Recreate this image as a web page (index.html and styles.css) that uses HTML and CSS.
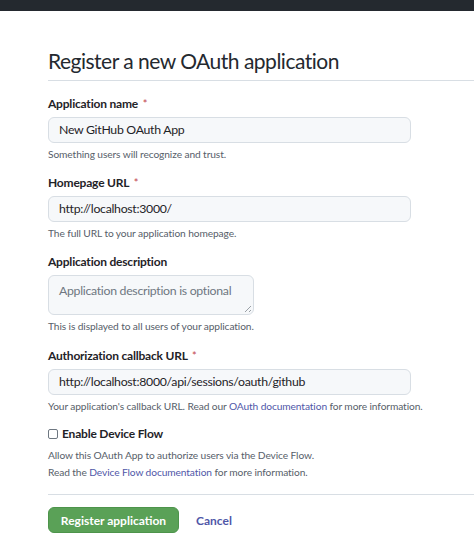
FILE: index.html
```html
<!DOCTYPE html>
<html lang="en">
<head>
<meta charset="utf-8">
<title>Register a new OAuth application</title>
<link rel="stylesheet" href="styles.css">
</head>
<body>
<div class="topbar"></div>
<main class="main">
  <div class="header">
    <h1 class="title">Register a new OAuth application</h1>
  </div>
  <form class="form">
    <div class="group">
      <label class="label">Application name <span class="req">*</span></label>
      <div class="input">New GitHub OAuth App</div>
      <p class="note">Something users will recognize and trust.</p>
    </div>
    <div class="group">
      <label class="label">Homepage URL <span class="req">*</span></label>
      <div class="input">http://localhost:3000/</div>
      <p class="note">The full URL to your application homepage.</p>
    </div>
    <div class="group group-ta">
      <label class="label">Application description</label>
      <div class="textarea"><span class="placeholder">Application description is optional</span><span class="grip"></span></div>
      <p class="note">This is displayed to all users of your application.</p>
    </div>
    <div class="group">
      <label class="label">Authorization callback URL <span class="req">*</span></label>
      <div class="input">http://localhost:8000/api/sessions/oauth/github</div>
      <p class="note">Your application's callback URL. Read our <a class="link" href="#">OAuth documentation</a> for more information.</p>
    </div>
    <div class="group device">
      <label class="check-label"><span class="checkbox"></span>Enable Device Flow</label>
      <p class="note note-tight">Allow this OAuth App to authorize users via the Device Flow.</p>
      <p class="note note-tight">Read the <a class="link" href="#">Device Flow documentation</a> for more information.</p>
    </div>
    <div class="actions">
      <button class="btn" type="button">Register application</button>
      <a class="cancel" href="#">Cancel</a>
    </div>
  </form>
</main>
</body>
</html>
```
FILE: styles.css
```css
* { box-sizing: border-box; }
body {
  margin: 0;
  background: #ffffff;
  font-family: Lato, "Noto Sans", sans-serif;
  color: #1f2328;
}
.topbar {
  height: 11px;
  background: #24292f;
}
.main {
  padding-left: 48px;
}
.header {
  margin-top: 34px;
  border-bottom: 1px solid #d8dee4;
  padding-bottom: 3px;
}
.title {
  margin: 0;
  font-size: 21px;
  font-weight: 400;
  letter-spacing: -0.5px;
  line-height: 32px;
  color: #24292f;
}
.form {
  margin-top: 12px;
}
.group {
  margin-bottom: 9px;
  display: flex;
  flex-direction: column;
  align-items: flex-start;
}
.group-ta { margin-bottom: 10px; }
.label {
  display: block;
  height: 20px;
  font-size: 12px;
  font-weight: 700;
  letter-spacing: -0.2px;
  line-height: 21px;
  color: #1f2328;
}
.req { color: #c2454c; font-weight: 400; font-size: 11px; line-height: 1; margin-left: 2px; }
.input {
  margin-top: 4px;
  width: 363px;
  height: 26px;
  padding: 0 10px;
  background: #f6f8fa;
  border: 1px solid #d8dee4;
  border-radius: 6px;
  font-size: 12.3px;
  letter-spacing: -0.3px;
  line-height: 24px;
  color: #1f2328;
}
.textarea {
  position: relative;
  margin-top: 4px;
  width: 206px;
  height: 40px;
  padding: 6px 10px 4px;
  background: #f6f8fa;
  border: 1px solid #d8dee4;
  border-radius: 6px;
  font-size: 12.3px;
  letter-spacing: -0.3px;
  line-height: 18px;
  white-space: nowrap;
}
.placeholder { color: #6e7781; }
.grip {
  position: absolute;
  right: 2px;
  bottom: 2px;
  width: 6px;
  height: 6px;
  background: linear-gradient(135deg, transparent 45%, #9aa0a6 45%, #9aa0a6 55%, transparent 55%, transparent 75%, #9aa0a6 75%, #9aa0a6 85%, transparent 85%);
}
.note {
  margin: 2px 0 0;
  height: 18px;
  font-size: 10.2px;
  letter-spacing: -0.1px;
  line-height: 18px;
  color: #57606a;
}
.note-tight { margin-top: 0; height: 17px; line-height: 17px; }
.device { margin-bottom: 0; }
.check-label {
  display: flex;
  align-items: center;
  gap: 4px;
  height: 20px;
  margin-bottom: 3px;
  font-size: 12px;
  font-weight: 700;
  letter-spacing: -0.2px;
  line-height: 20px;
  color: #1f2328;
}
.checkbox {
  width: 10px;
  height: 10px;
  border: 1px solid #6e7781;
  border-radius: 2px;
  background: #fff;
}
.link { color: #4f57a8; text-decoration: none; }
.actions {
  margin-top: 13px;
  border-top: 1px solid #d8dee4;
  padding-top: 12px;
  display: flex;
  align-items: center;
  gap: 17px;
}
.btn {
  height: 26px;
  width: 131px;
  padding: 0;
  background: #5aa157;
  border: 1px solid #4d944b;
  border-radius: 6px;
  color: #ffffff;
  font-family: Lato, "Noto Sans", sans-serif;
  font-size: 12px;
  font-weight: 700;
}
.cancel {
  color: #4f57a8;
  text-decoration: none;
  font-size: 12px;
  font-weight: 700;
}
```
